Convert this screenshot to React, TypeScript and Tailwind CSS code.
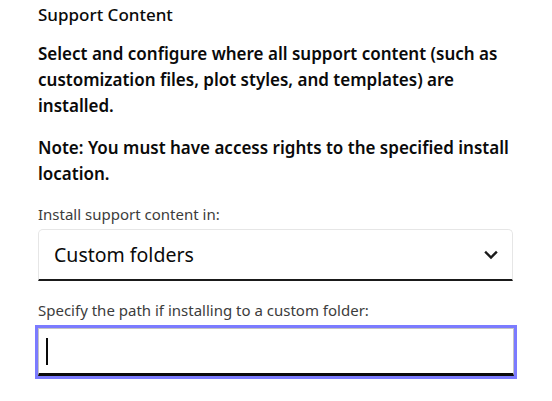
import React from "react";

export default function App() {
  return (
    <div className="w-[552px] h-[401px] bg-white overflow-hidden text-[#1a1a1a]" style={{ fontFamily: '"Noto Sans", "Open Sans", sans-serif' }}>
      <div className="pl-[38px] pr-[38px] pt-[4px]">
        <div className="text-[17px] leading-[22px] font-medium text-[#0a0a0a]">Support Content</div>
        <p className="mt-[15px] text-[17px] leading-[26px] font-semibold text-[#0a0a0a]">
          Select and configure where all support content (such as customization files, plot styles, and templates) are installed.
        </p>
        <p className="mt-[16px] text-[17px] leading-[26px] font-semibold text-[#0a0a0a]">
          Note: You must have access rights to the specified install location.
        </p>
        <div className="mt-[17px] text-[15px] leading-[20px] text-[#3c3c3c]">Install support content in:</div>
        <div className="mt-[5px] w-[475px] h-[52px] rounded-t-[5px] border border-[#e6e6e6] border-b-2 border-b-[#1a1a1a] flex items-center justify-between pl-[15px] pr-[14px]">
          <span className="text-[19.5px] text-[#0a0a0a]">Custom folders</span>
          <svg width="14" height="10" viewBox="0 0 14 10" fill="none">
            <path d="M2 2.5 L7 7.5 L12 2.5" stroke="#1a1a1a" strokeWidth="2.4" strokeLinecap="square" />
          </svg>
        </div>
        <div className="mt-[19px] text-[15px] leading-[20px] text-[#3c3c3c]">Specify the path if installing to a custom folder:</div>
        <div className="mt-[5px] -ml-[3px] w-[482px] h-[54px] border-[3px] border-[#7b7bff]">
          <div className="w-full h-full border border-[#c4c4c4] border-b-[3px] border-b-[#0a0a0a] flex items-center pl-[7px]">
            <div className="w-[2px] h-[27px] bg-[#0a0a0a]" />
          </div>
        </div>
      </div>
    </div>
  );
}
